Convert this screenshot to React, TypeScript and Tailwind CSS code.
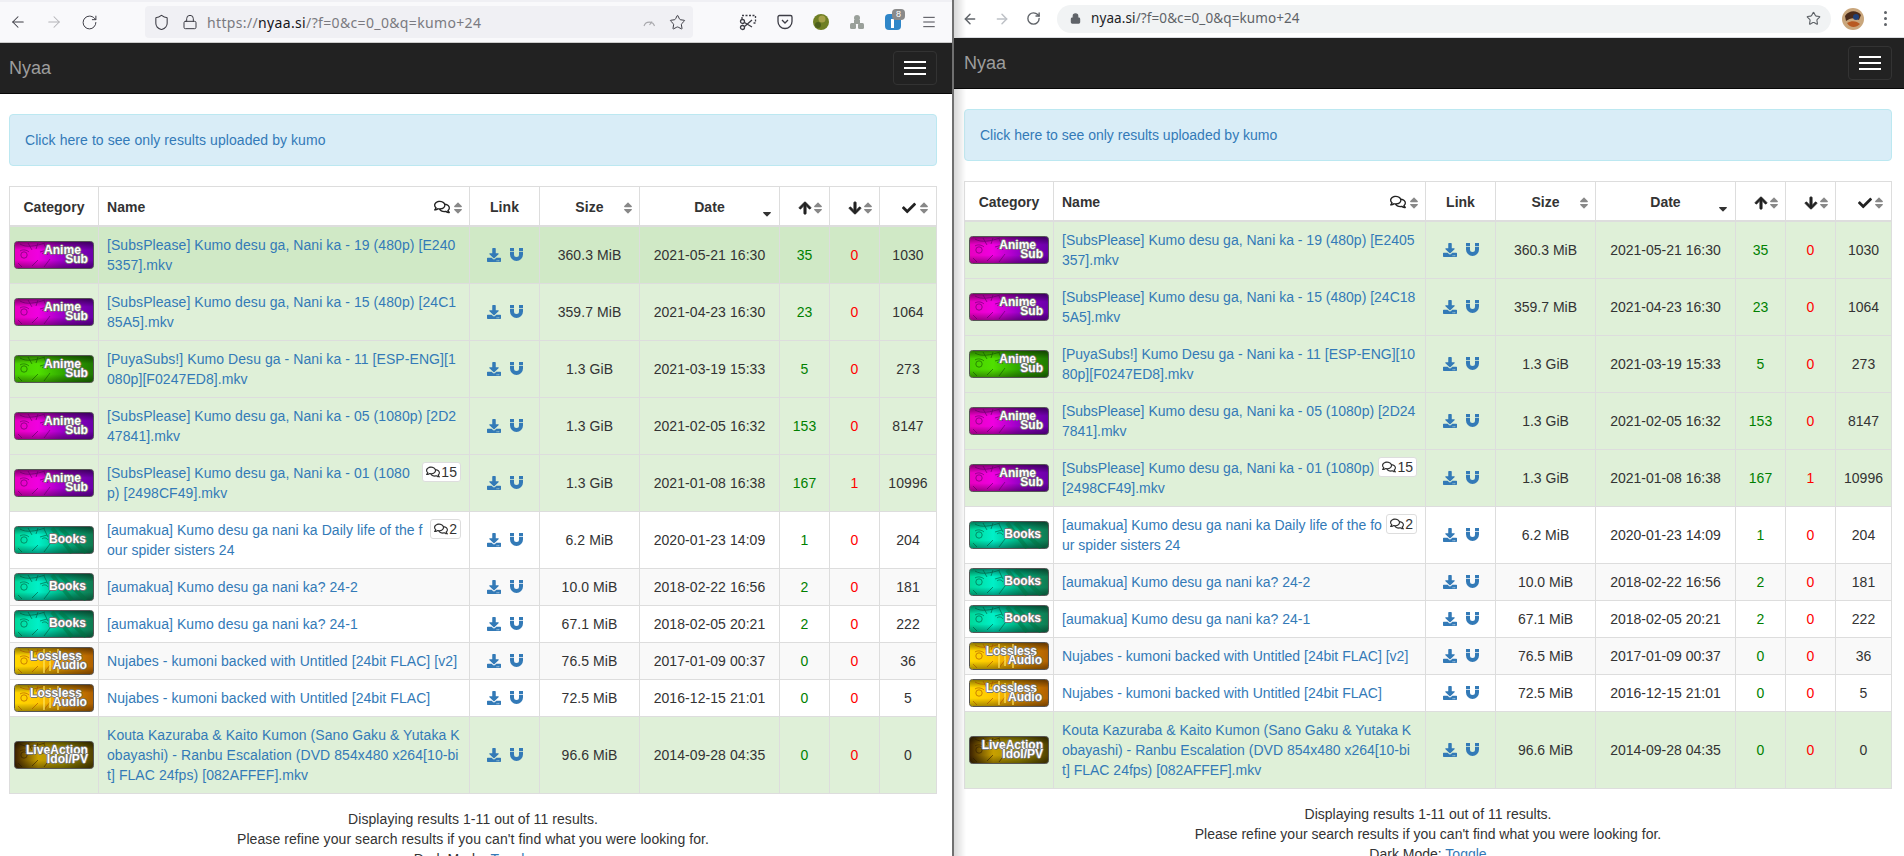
import React from "react";
import { FaDownload, FaRegComments, FaArrowUp, FaArrowDown, FaCheck, FaSort, FaSortDown } from "react-icons/fa";
import { ArrowLeft, ArrowRight, RotateCw, Shield, Lock, Star, Menu } from "lucide-react";

type Kind = "anime" | "puya" | "books" | "lossless" | "live";

const BADGE: Record<Kind, { stops: string[]; ink: string; top: string; bottom?: string; right: number; gap: string }> = {
  anime: { stops: ["#e800c0", "#f000e0", "#9a00c8", "#6a00a8"], ink: "#50005a", top: "Anime", bottom: "Sub", right: 6, gap: "mr-[7px]" },
  puya: { stops: ["#48d000", "#50e000", "#30a800", "#1f7a00"], ink: "#0d4a00", top: "Anime", bottom: "Sub", right: 6, gap: "mr-[7px]" },
  books: { stops: ["#00d898", "#00f0c8", "#00b080", "#107a50"], ink: "#004a30", top: "Books", right: 8, gap: "" },
  lossless: { stops: ["#ffd800", "#ffc800", "#e09000", "#b06000"], ink: "#a04000", top: "Lossless", bottom: "Audio", right: 7, gap: "mr-[5px]" },
  live: { stops: ["#3a2000", "#c8a000", "#a09000", "#504000"], ink: "#2a1800", top: "LiveAction", bottom: "Idol/PV", right: 6, gap: "" },
};

function Badge({ kind, id }: { kind: Kind; id: string }) {
  const b = BADGE[kind];
  return (
    <div className="relative w-20 h-7 mx-auto">
      <svg width="80" height="28" viewBox="0 0 80 28" className="block">
        <defs>
          <linearGradient id={id} x1="0" x2="1" y1="0" y2="0">
            <stop offset="0" stopColor={b.stops[0]} />
            <stop offset="0.3" stopColor={b.stops[1]} />
            <stop offset="0.62" stopColor={b.stops[2]} />
            <stop offset="1" stopColor={b.stops[3]} />
          </linearGradient>
          <linearGradient id={id + "v"} x1="0" x2="0" y1="0" y2="1">
            <stop offset="0" stopColor="#000" stopOpacity="0.45" />
            <stop offset="0.3" stopColor="#000" stopOpacity="0" />
            <stop offset="0.7" stopColor="#000" stopOpacity="0" />
            <stop offset="1" stopColor="#000" stopOpacity="0.35" />
          </linearGradient>
        </defs>
        <rect x="0.5" y="0.5" width="79" height="27" rx="3" fill={`url(#${id})`} stroke="#555" />
        <rect x="1" y="1" width="78" height="26" rx="3" fill={`url(#${id}v)`} />
        <g fill="none" stroke={b.ink} strokeWidth="0.8" opacity="0.7">
          <path d="M6 3 C12 7 22 5 31 2 M14 2 L18 9 M24 2 L22 8 M30 3 L34 11" />
          <circle cx="10" cy="14" r="3.2" />
          <path d="M6 10 C9 8 13 9 15 11 M26 11 L33 9 M28 13 C30 11 33 12 34 14 M18 25 L24 19 M30 26 L36 18 M4 22 L8 26" />
        </g>
        {kind === "books" && <path d="M46 2 L72 27 M38 2 L58 27" stroke="#00703f" strokeWidth="4" fill="none" opacity="0.5" />}
        {kind === "lossless" && <path d="M30 2 V26 M36 4 V24 M44 2 V26" stroke="#ffe860" strokeWidth="2" fill="none" opacity="0.6" />}
      </svg>
      <div
        className="absolute flex flex-col items-end font-bold text-white text-[12px] leading-[9px] [text-shadow:1px_0_0_#777,-1px_0_0_#777,0_1px_0_#777,0_-1px_0_#777]"
        style={{ right: b.right, top: b.bottom ? 5 : 9 }}
      >
        <span className={b.gap}>{b.top}</span>
        {b.bottom && <span>{b.bottom}</span>}
      </div>
    </div>
  );
}

function Magnet() {
  return (
    <svg width="13" height="13" viewBox="0 0 13 13" fill="currentColor">
      <path d="M0 0 H4 V3 H0 Z M9 0 H13 V3 H9 Z" />
      <path d="M0 3.7 H4 V6.5 A2.5 2.5 0 0 0 9 6.5 V3.7 H13 V6.5 A6.5 6.5 0 0 1 0 6.5 Z" />
    </svg>
  );
}

type Row = { k: Kind; name: string; size: string; date: string; s: number; l: number; d: number; c?: number; tone: "ok" | "none" | "alt" };

const ROWS: Row[] = [
  { k: "anime", name: "[SubsPlease] Kumo desu ga, Nani ka - 19 (480p) [E2405357].mkv", size: "360.3 MiB", date: "2021-05-21 16:30", s: 35, l: 0, d: 1030, tone: "ok" },
  { k: "anime", name: "[SubsPlease] Kumo desu ga, Nani ka - 15 (480p) [24C185A5].mkv", size: "359.7 MiB", date: "2021-04-23 16:30", s: 23, l: 0, d: 1064, tone: "ok" },
  { k: "puya", name: "[PuyaSubs!] Kumo Desu ga - Nani ka - 11 [ESP-ENG][1080p][F0247ED8].mkv", size: "1.3 GiB", date: "2021-03-19 15:33", s: 5, l: 0, d: 273, tone: "ok" },
  { k: "anime", name: "[SubsPlease] Kumo desu ga, Nani ka - 05 (1080p) [2D247841].mkv", size: "1.3 GiB", date: "2021-02-05 16:32", s: 153, l: 0, d: 8147, tone: "ok" },
  { k: "anime", name: "[SubsPlease] Kumo desu ga, Nani ka - 01 (1080p) [2498CF49].mkv", size: "1.3 GiB", date: "2021-01-08 16:38", s: 167, l: 1, d: 10996, c: 15, tone: "ok" },
  { k: "books", name: "[aumakua] Kumo desu ga nani ka Daily life of the four spider sisters 24", size: "6.2 MiB", date: "2020-01-23 14:09", s: 1, l: 0, d: 204, c: 2, tone: "none" },
  { k: "books", name: "[aumakua] Kumo desu ga nani ka? 24-2", size: "10.0 MiB", date: "2018-02-22 16:56", s: 2, l: 0, d: 181, tone: "alt" },
  { k: "books", name: "[aumakua] Kumo desu ga nani ka? 24-1", size: "67.1 MiB", date: "2018-02-05 20:21", s: 2, l: 0, d: 222, tone: "none" },
  { k: "lossless", name: "Nujabes - kumoni backed with Untitled [24bit FLAC] [v2]", size: "76.5 MiB", date: "2017-01-09 00:37", s: 0, l: 0, d: 36, tone: "alt" },
  { k: "lossless", name: "Nujabes - kumoni backed with Untitled [24bit FLAC]", size: "72.5 MiB", date: "2016-12-15 21:01", s: 0, l: 0, d: 5, tone: "none" },
  { k: "live", name: "Kouta Kazuraba & Kaito Kumon (Sano Gaku & Yutaka Kobayashi) - Ranbu Escalation (DVD 854x480 x264[10-bit] FLAC 24fps) [082AFFEF].mkv", size: "96.6 MiB", date: "2014-09-28 04:35", s: 0, l: 0, d: 0, tone: "ok" },
];

const Sort = ({ cls }: { cls: string }) => <FaSort className={`absolute text-[#888] text-[14px] ${cls}`} />;

function Results({ pane }: { pane: "a" | "b" }) {
  const left = pane === "a";
  const td = "border border-[#ddd] p-2 align-middle text-center";
  const th = "relative border border-[#ddd] border-b-2 pt-[9px] pb-[7px] px-2";
  return (
    <table className="w-[928px] table-fixed border-collapse text-[14px] leading-5 text-[#333]">
      <colgroup>
        <col className="w-[89px]" />
        <col className={left ? "w-[371px]" : "w-[372px]"} />
        <col className="w-[70px]" />
        <col className="w-[100px]" />
        <col className="w-[140px]" />
        <col className="w-[50px]" />
        <col className="w-[50px]" />
        <col />
      </colgroup>
      <thead>
        <tr className="h-[39px] font-bold">
          <th className={`${th} text-center`}>Category</th>
          <th className={`${th} text-left`}>
            Name
            <FaRegComments className="absolute right-[19px] top-[12px] text-[16px] text-[#222]" />
            <Sort cls="right-[4px] top-[14px]" />
          </th>
          <th className={`${th} text-center`}>Link</th>
          <th className={`${th} text-center`}>
            Size
            <Sort cls="right-[4px] top-[14px]" />
          </th>
          <th className={`${th} text-center`}>
            Date
            <FaSortDown className="absolute right-[5px] top-[17px] text-[14px] text-[#333]" />
          </th>
          <th className={th}>
            <FaArrowUp stroke="currentColor" strokeWidth={30} className="absolute left-[18px] top-[14px] text-[14px] text-[#222]" />
            <Sort cls="right-[4px] top-[14px]" />
          </th>
          <th className={th}>
            <FaArrowDown stroke="currentColor" strokeWidth={30} className="absolute left-[18px] top-[14px] text-[14px] text-[#222]" />
            <Sort cls="right-[4px] top-[14px]" />
          </th>
          <th className={th}>
            <FaCheck className="absolute left-[22px] top-[14px] text-[14px] text-[#222]" />
            <Sort cls="right-[5px] top-[14px]" />
          </th>
        </tr>
      </thead>
      <tbody>
        {ROWS.map((r, i) => {
          const bg =
            r.tone === "ok"
              ? left && i === 0
                ? "bg-[#d0e9c6]"
                : "bg-[#dff0d8]"
              : r.tone === "alt"
                ? "bg-[#f9f9f9]"
                : "bg-white";
          return (
            <tr key={i} className={bg}>
              <td className="border border-[#ddd] py-0 px-[4px] align-middle">
                <Badge kind={r.k} id={`${pane}${i}`} />
              </td>
              <td className="border border-[#ddd] p-2 align-middle text-left break-all">
                {r.c !== undefined && (
                  <span className="float-right -mt-[1px] ml-[2px] flex h-5 items-center gap-[1px] rounded-[3px] border border-[#ddd] bg-white px-[3px] text-[#333]">
                    <FaRegComments className="text-[14px]" />
                    {r.c}
                  </span>
                )}
                <a className="text-[#337ab7]">{r.name}</a>
              </td>
              <td className={td}>
                <span className="flex items-center justify-center gap-[9px] text-[#337ab7]">
                  <FaDownload className="text-[14px]" />
                  <Magnet />
                </span>
              </td>
              <td className={td}>{r.size}</td>
              <td className={td}>{r.date}</td>
              <td className={`${td} text-[#008000]`}>{r.s}</td>
              <td className={`${td} text-[#ff0000]`}>{r.l}</td>
              <td className={td}>{r.d}</td>
            </tr>
          );
        })}
      </tbody>
    </table>
  );
}

function Page({ pane }: { pane: "a" | "b" }) {
  const left = pane === "a";
  return (
    <>
      <nav className={`flex h-[51px] items-center justify-between border-b border-[#080808] bg-[#222] ${left ? "pl-[9px] pr-[15px]" : "pl-[10px] pr-[12px]"}`}>
        <span className="text-[18px] leading-5 text-[#9d9d9d]">Nyaa</span>
        <button className="flex h-[34px] w-[44px] flex-col items-center justify-center gap-1 rounded border border-[#333]">
          <span className="block h-[2px] w-[22px] bg-white" />
          <span className="block h-[2px] w-[22px] bg-white" />
          <span className="block h-[2px] w-[22px] bg-white" />
        </button>
      </nav>
      <main className={`pt-5 ${left ? "pl-[9px] tracking-[0.07px]" : "pl-[10px]"}`}>
        <div className="mb-5 w-[928px] rounded border border-[#bce8f1] bg-[#d9edf7] p-[15px] text-[14px] leading-5 text-[#337ab7]">
          Click here to see only results uploaded by kumo
        </div>
        <Results pane={pane} />
        <div className="mt-[15px] w-[928px] text-center text-[14px] leading-5 text-[#333]">
          <p>Displaying results 1-11 out of 11 results.</p>
          <p>Please refine your search results if you can't find what you were looking for.</p>
          <p>
            Dark Mode: <a className="text-[#337ab7]">Toggle</a>
          </p>
        </div>
      </main>
    </>
  );
}

function FirefoxBar() {
  return (
    <div className="flex h-[43px] items-center border-b border-[#ccc] border-t-2 border-t-[#f0f0f4] bg-[#f9f9fb] text-[#3d3d45]">
      <div className="flex w-[145px] items-center pl-[9px] gap-[18px]">
        <ArrowLeft size={18} strokeWidth={1.4} />
        <ArrowRight size={18} strokeWidth={1.4} className="text-[#b4b4b8]" />
        <RotateCw size={17} strokeWidth={1.4} />
      </div>
      <div className="flex h-8 w-[548px] items-center rounded bg-[#f0f0f4] pl-[8px] pr-[7px]">
        <Shield size={17} strokeWidth={1.5} />
        <Lock size={16} strokeWidth={1.5} className="ml-[12px]" />
        <span className="ml-[9px] font-['Noto_Sans'] text-[14px] tracking-[0.35px] text-[#7a7a80]">
          https://<span className="text-[#15141a]">nyaa.si</span>/?f=0&amp;c=0_0&amp;q=kumo+24
        </span>
        <svg width="14" height="14" viewBox="0 0 14 14" className="ml-auto mr-[13px] text-[#a8a8ac]" fill="none" stroke="currentColor" strokeWidth="1.1">
          <path d="M2 11 A5.5 5.5 0 0 1 12.5 11 M7.5 10 L10 6.5" />
        </svg>
        <Star size={17} strokeWidth={1.4} />
      </div>
      <div className="flex flex-1 items-center justify-between pl-[46px] pr-[15px]">
        <svg width="18" height="18" viewBox="0 0 18 18" fill="none" stroke="currentColor" strokeWidth="1.3">
          <path d="M3 6 V2.5 H16.5 V10 H13" strokeDasharray="2 1.5" />
          <circle cx="3.5" cy="14.5" r="2" />
          <circle cx="3.5" cy="8.5" r="2" />
          <path d="M5.5 9.5 L13 14 M5.5 13.5 L13 7" />
        </svg>
        <svg width="16" height="16" viewBox="0 0 16 16" fill="none" stroke="currentColor" strokeWidth="1.3">
          <path d="M2.5 1.5 H13.5 A1.5 1.5 0 0 1 15 3 V7.5 A7 7 0 0 1 1 7.5 V3 A1.5 1.5 0 0 1 2.5 1.5 Z M5 6 L8 9 L11 6" />
        </svg>
        <svg width="16" height="16" viewBox="0 0 16 16">
          <circle cx="8" cy="8" r="8" fill="#6f7f24" />
          <circle cx="9" cy="5" r="3.5" fill="#a7a24a" />
          <circle cx="5" cy="11" r="3" fill="#4d5f1c" />
        </svg>
        <svg width="16" height="16" viewBox="0 0 16 16" fill="#9aa09a">
          <circle cx="8" cy="4" r="3" />
          <rect x="1" y="9" width="6" height="6" rx="1.5" />
          <rect x="9" y="9" width="6" height="6" rx="1.5" />
          <rect x="5" y="6" width="6" height="4" />
        </svg>
        <span className="relative block h-4 w-4 rounded-sm bg-[#2f86c8]">
          <span className="absolute left-[6px] top-[5px] h-[9px] w-[3px] bg-white" />
          <span className="absolute -right-1 -top-[5px] flex h-[11px] w-[13px] items-center justify-center rounded-sm bg-[#8a8a8a] text-[9px] leading-none text-white">8</span>
        </span>
        <Menu size={16} strokeWidth={1.4} />
      </div>
    </div>
  );
}

function ChromeBar() {
  return (
    <div className="flex h-[38px] items-center border-b border-[#dadce0] bg-white text-[#5f6368]">
      <div className="flex w-[103px] items-center gap-[16px] pl-[8px]">
        <ArrowLeft size={16} strokeWidth={2.2} />
        <ArrowRight size={16} strokeWidth={2.2} className="text-[#bdc1c6]" />
        <RotateCw size={15} strokeWidth={2.2} />
      </div>
      <div className="flex h-7 w-[774px] items-center rounded-full bg-[#f1f3f4] pl-[13px] pr-[10px]">
        <Lock size={11} strokeWidth={2.5} fill="currentColor" />
        <span className="ml-[10px] font-['Noto_Sans'] text-[13.5px] tracking-[0.1px] text-[#202124]">
          nyaa.si<span className="text-[#5f6368]">/?f=0&amp;c=0_0&amp;q=kumo+24</span>
        </span>
        <Star size={15} strokeWidth={1.8} className="ml-auto" />
      </div>
      <svg width="22" height="22" viewBox="0 0 22 22" className="ml-[11px]">
        <circle cx="11" cy="11" r="11" fill="#c9a67c" />
        <path d="M3 8 C7 2 15 2 19 7 L17 12 C12 9 8 10 4 13 Z" fill="#4a2a1a" />
        <circle cx="14" cy="9" r="3" fill="#1f3f77" />
        <path d="M5 15 C10 12 15 13 18 16 C14 20 8 20 5 15 Z" fill="#b85a22" />
      </svg>
      <span className="ml-[20px] flex flex-col gap-[3px]">
        <span className="block h-[3px] w-[3px] rounded-full bg-[#5f6368]" />
        <span className="block h-[3px] w-[3px] rounded-full bg-[#5f6368]" />
        <span className="block h-[3px] w-[3px] rounded-full bg-[#5f6368]" />
      </span>
    </div>
  );
}

export default function App() {
  return (
    <div className="flex h-[856px] w-[1904px] overflow-hidden bg-white font-['Liberation_Sans',Arial,sans-serif]">
      <div className="w-[952px] shrink-0">
        <FirefoxBar />
        <Page pane="a" />
      </div>
      <div className="w-[2px] shrink-0 bg-[#707070]" />
      <div className="relative flex-1">
        <div className="absolute left-0 top-0 h-full w-[12px] bg-gradient-to-r from-[#d8d8d8] to-transparent pointer-events-none z-10 [mask-image:linear-gradient(to_bottom,black_38px,transparent_38px,transparent_89px,black_89px)]" />
        <ChromeBar />
        <Page pane="b" />
      </div>
    </div>
  );
}
